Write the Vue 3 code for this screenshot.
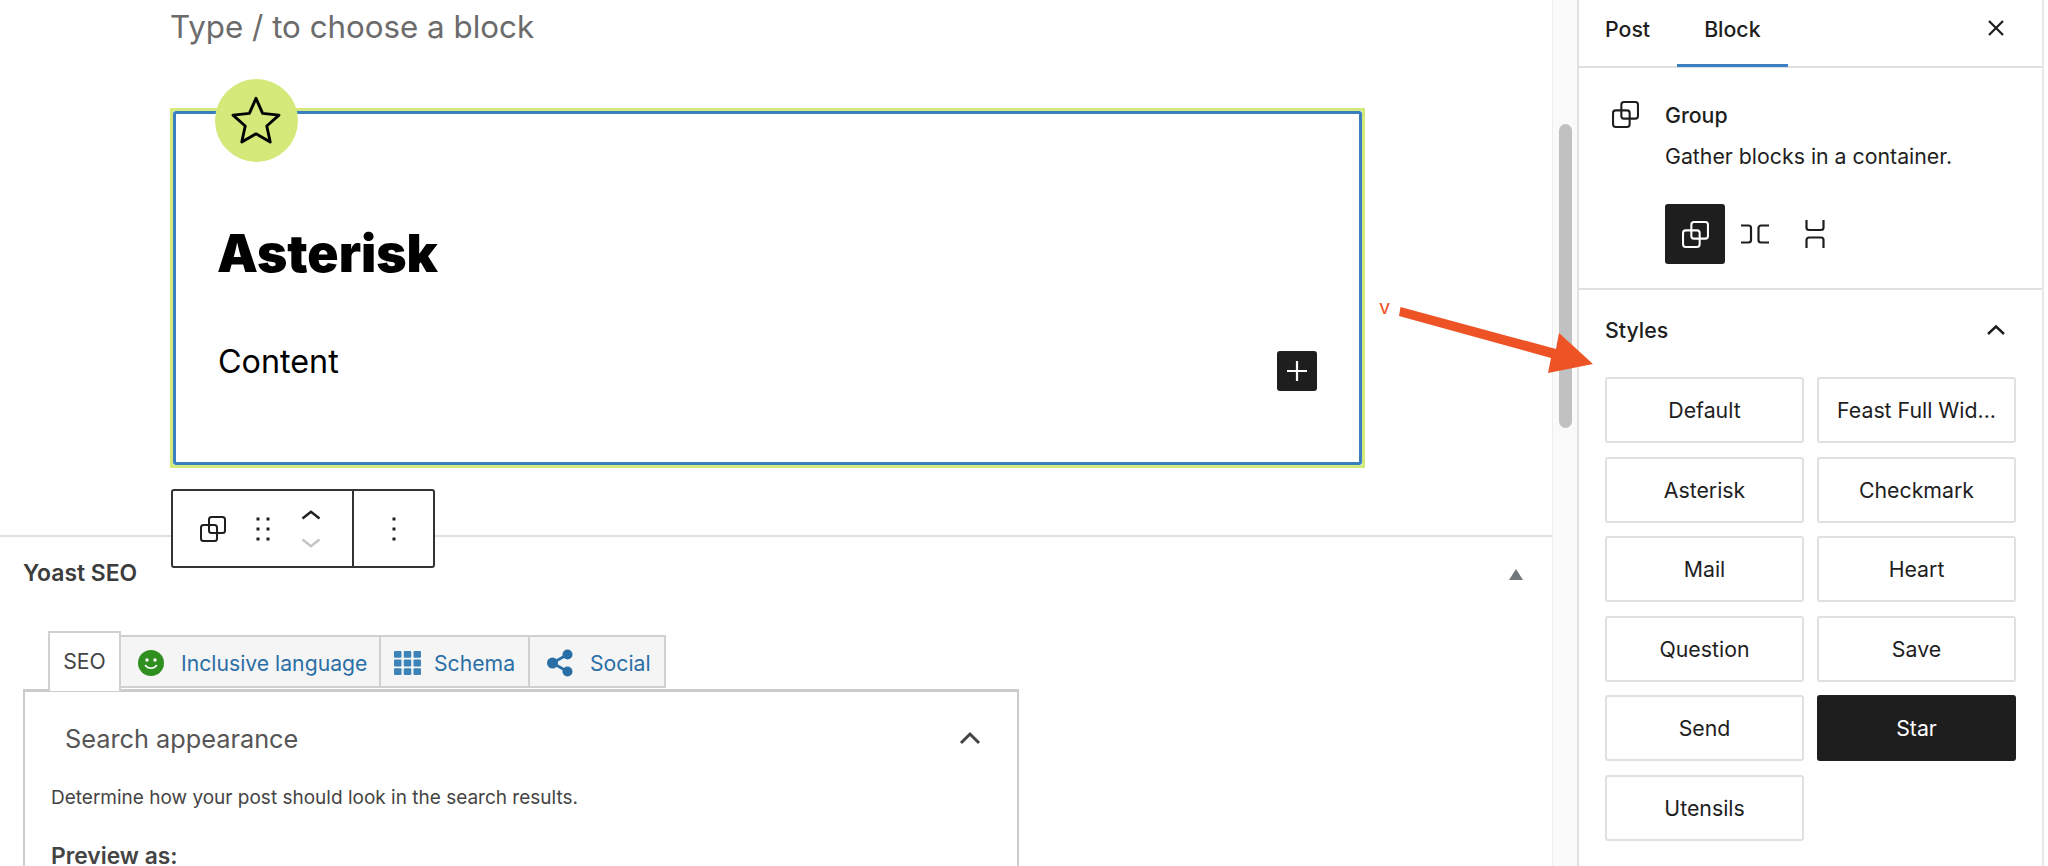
<template>
  <div class="app">
    <div class="editor">
      <div class="placeholder">Type / to choose a block</div>

      <div class="group-outer">
        <div class="group-inner">
          <h2 class="heading">Asterisk</h2>
          <p class="content-text">Content</p>
          <button class="plus">
            <svg width="24" height="24" viewBox="0 0 24 24"><path d="M12 2v20M2 12h20" stroke="#fff" stroke-width="2.2" fill="none" /></svg>
          </button>
        </div>
        <div class="star-badge">
          <svg class="star" width="52" height="50" viewBox="0 0 54 52">
            <path d="M27 3.5l6.9 15.6 17 1.8-12.7 11.3 3.6 16.7L27 40.4l-14.8 8.5 3.6-16.7L3.100 20.900l17-1.800z" fill="none" stroke="#000" stroke-width="3" stroke-linejoin="round" />
          </svg>
        </div>
      </div>

      <section class="yoast">
        <div class="yoast-head">
          <span class="yoast-title">Yoast SEO</span>
          <span class="triangle"></span>
        </div>
        <div class="yoast-tabs">
          <div class="ytab active">SEO</div>
          <div class="ytab inclusive">
            <svg width="26" height="26" viewBox="0 0 26 26">
              <circle cx="13" cy="13" r="13" fill="#2f8f1f" />
              <circle cx="9" cy="10" r="1.700" fill="#fff" />
              <circle cx="17" cy="10" r="1.700" fill="#fff" />
              <path d="M7.500 15.500c2.500 3.600 8.500 3.600 11 0" stroke="#fff" stroke-width="1.600" fill="none" stroke-linecap="round" />
            </svg>
            <span>Inclusive language</span>
          </div>
          <div class="ytab schema">
            <svg width="27" height="24" viewBox="0 0 27 24" fill="#3c84b8">
              <rect v-for="c in gridCells" :key="c.id" :x="c.x" :y="c.y" width="7.500" height="6.800" rx="1" />
            </svg>
            <span>Schema</span>
          </div>
          <div class="ytab social">
            <svg width="26" height="28" viewBox="0 0 26 28" fill="#2a6ea6">
              <circle cx="5.500" cy="14" r="5.500" />
              <circle cx="20.500" cy="5.500" r="5" />
              <circle cx="20.500" cy="22.500" r="5" />
              <path d="M5.500 14L20.500 5.500M5.500 14l15 8.500" stroke="#2a6ea6" stroke-width="2.600" />
            </svg>
            <span>Social</span>
          </div>
        </div>
        <div class="yoast-box">
          <div class="search-head">
            <span>Search appearance</span>
            <svg width="24" height="16" viewBox="0 0 24 16"><path d="M3 13l9-9 9 9" fill="none" stroke="#444" stroke-width="3" /></svg>
          </div>
          <p class="determine">Determine how your post should look in the search results.</p>
          <p class="preview">Preview as:</p>
        </div>
      </section>

      <div class="toolbar">
        <div class="tool-main">
          <svg class="tool-group" width="26" height="26" viewBox="0 0 26 26">
            <rect x="9" y="1" width="16" height="16" rx="2.500" fill="none" stroke="#1e1e1e" stroke-width="2" />
            <rect x="1" y="9" width="16" height="16" rx="2.500" fill="none" stroke="#1e1e1e" stroke-width="2" />
          </svg>
          <svg class="tool-drag" width="14" height="24" viewBox="0 0 14 24" fill="#1e1e1e">
            <rect x="0.500" y="0.500" width="3" height="3" /><rect x="10.500" y="0.500" width="3" height="3" />
            <rect x="0.500" y="10.500" width="3" height="3" /><rect x="10.500" y="10.500" width="3" height="3" />
            <rect x="0.500" y="20.500" width="3" height="3" /><rect x="10.500" y="20.500" width="3" height="3" />
          </svg>
          <div class="movers">
            <svg width="20" height="10" viewBox="0 0 20 10"><path d="M1.500 8.500L10 1.800l8.500 6.700" fill="none" stroke="#1e1e1e" stroke-width="2.400" /></svg>
            <svg width="20" height="10" viewBox="0 0 20 10"><path d="M1.500 1.500L10 8.200l8.500-6.700" fill="none" stroke="#c4c4c4" stroke-width="2.400" /></svg>
          </div>
        </div>
        <div class="tool-more">
          <svg width="4" height="24" viewBox="0 0 4 24" fill="#1e1e1e">
            <rect x="0.500" y="0.500" width="3" height="3" /><rect x="0.500" y="10.500" width="3" height="3" /><rect x="0.500" y="20.500" width="3" height="3" />
          </svg>
        </div>
      </div>
    </div>

    <div class="scroll-track"><div class="scroll-thumb"></div></div>

    <aside class="sidebar">
      <div class="side-tabs">
        <span class="side-tab">Post</span>
        <span class="side-tab current">Block</span>
        <svg class="close" width="20" height="20" viewBox="0 0 20 20"><path d="M3 3l14 14M17 3L3 17" stroke="#1e1e1e" stroke-width="2.200" fill="none" /></svg>
      </div>

      <div class="block-card">
        <svg class="card-icon" width="27" height="27" viewBox="0 0 26 26">
          <rect x="9" y="1" width="16" height="16" rx="2.500" fill="none" stroke="#1e1e1e" stroke-width="2" />
          <rect x="1" y="9" width="16" height="16" rx="2.500" fill="none" stroke="#1e1e1e" stroke-width="2" />
        </svg>
        <div class="card-body">
          <div class="card-title">Group</div>
          <div class="card-desc">Gather blocks in a container.</div>
          <div class="variations">
            <div class="variation on">
              <svg width="27" height="27" viewBox="0 0 26 26">
                <rect x="9" y="1" width="16" height="16" rx="2.500" fill="none" stroke="#fff" stroke-width="2" />
                <rect x="1" y="9" width="16" height="16" rx="2.500" fill="none" stroke="#fff" stroke-width="2" />
              </svg>
            </div>
            <div class="variation">
              <svg width="28" height="20" viewBox="0 0 28 20">
                <path d="M0 1.500h7.500a2.500 2.500 0 0 1 2.500 2.500v12a2.500 2.500 0 0 1-2.500 2.500H0M28 1.500h-8a2.500 2.500 0 0 0-2.500 2.500v12a2.500 2.500 0 0 0 2.500 2.500h8" fill="none" stroke="#1e1e1e" stroke-width="2.200" />
              </svg>
            </div>
            <div class="variation">
              <svg width="20" height="28" viewBox="0 0 20 28">
                <path d="M1.500 0v7.500A2.500 2.500 0 0 0 4 10h12a2.500 2.500 0 0 0 2.500-2.500V0M1.500 28v-8A2.500 2.500 0 0 1 4 17.500h12a2.500 2.500 0 0 1 2.500 2.500v8" fill="none" stroke="#1e1e1e" stroke-width="2.200" />
              </svg>
            </div>
          </div>
        </div>
      </div>

      <div class="styles-panel">
        <div class="styles-head">
          <span>Styles</span>
          <svg width="20" height="12" viewBox="0 0 20 12"><path d="M2 10l8-7.500 8 7.500" fill="none" stroke="#1e1e1e" stroke-width="2.400" /></svg>
        </div>
        <div class="style-grid">
          <div
            v-for="s in blockStyles"
            :key="s"
            class="style-btn"
            :class="{ selected: s === 'Star' }"
          >{{ s }}</div>
        </div>
      </div>
    </aside>

    <div class="annotation">
      <span class="arrow-v">v</span>
      <svg class="arrow" width="200" height="72" viewBox="0 0 200 72">
        <path d="M1.500 2L157 44 160 28 194 59 149 68 152 53 0 11z" fill="#ee5326" />
      </svg>
    </div>
  </div>
</template>

<script setup>
const blockStyles = [
  "Default", "Feast Full Wid...",
  "Asterisk", "Checkmark",
  "Mail", "Heart",
  "Question", "Save",
  "Send", "Star",
  "Utensils",
];

// 3 x 3 schema icon
const gridCells = [];
for (let row = 0; row < 3; row++) {
  for (let col = 0; col < 3; col++) {
    gridCells.push({ id: row * 3 + col, x: col * 9.75, y: row * 8.6 });
  }
}
</script>

<style>
html, body {
  margin: 0;
  background: #fff;
  overflow: hidden;
}
</style>

<style scoped>
.app {
  display: flex;
  position: relative;
  width: 2048px;
  height: 866px;
  overflow: hidden;
  background: #fff;
  font-family: Inter, "Liberation Sans", sans-serif;
  color: #1e1e1e;
}

/* editor column */
.editor {
  position: relative;
  flex: none;
  width: 1552px;
  height: 866px;
}
.placeholder {
  height: 54px;
  margin-bottom: 54px;
  padding-left: 170px;
  font-size: 31.300px;
  line-height: 54px;
  color: #6b6b6b;
}
.group-outer {
  position: relative;
  box-sizing: border-box;
  width: 1195px;
  height: 360px;
  margin-left: 170px;
  border: 3px solid #d3e97a;
}
.group-inner {
  position: relative;
  box-sizing: border-box;
  height: 100%;
  padding: 0 41px;
  border: 3px solid #3a7fc1;
  border-radius: 3px;
}
.heading {
  margin: 106px 0 0;
  font-size: 51.600px;
  line-height: 66px;
  font-weight: 900;
  color: #000;
}
.content-text {
  margin: 56px 0 0 1px;
  font-size: 32.300px;
  line-height: 40px;
  color: #000;
}
.plus {
  position: absolute;
  left: 1101px;
  top: 237px;
  display: flex;
  align-items: center;
  justify-content: center;
  width: 40px;
  height: 40px;
  padding: 0;
  border: 0;
  border-radius: 3px;
  background: #1e1e1e;
}
.star-badge {
  position: absolute;
  left: 42px;
  top: -32px;
  display: flex;
  align-items: center;
  justify-content: center;
  width: 83px;
  height: 83px;
  border-radius: 50%;
  background: #d3e97a;
}
.star {
  margin: 0 1px 2px 0;
}

/* block toolbar */
.toolbar {
  position: absolute;
  left: 171px;
  top: 489px;
  display: flex;
  box-sizing: border-box;
  width: 264px;
  height: 79px;
  border: 2px solid #333;
  border-radius: 3px;
  background: #fff;
}
.tool-main {
  display: flex;
  align-items: center;
  width: 179px;
  border-right: 2px solid #333;
}
.tool-group {
  margin-left: 27px;
}
.tool-drag {
  margin-left: 30px;
}
.movers {
  display: flex;
  flex-direction: column;
  gap: 18px;
  margin-left: 31px;
}
.tool-more {
  display: flex;
  flex: 1;
  align-items: center;
  justify-content: center;
}

/* yoast metabox */
.yoast {
  margin-top: 67px;
  border-top: 2px solid #e0e0e0;
}
.yoast-head {
  display: flex;
  align-items: center;
  justify-content: space-between;
  box-sizing: border-box;
  height: 74px;
  padding: 0 29px 2px 23px;
}
.yoast-title {
  font-size: 22.900px;
  font-weight: 600;
  color: #3c3c3c;
}
.triangle {
  width: 0;
  height: 0;
  margin-top: 2px;
  border-left: 7px solid transparent;
  border-right: 7px solid transparent;
  border-bottom: 11px solid #72777c;
}
.yoast-tabs {
  display: flex;
  align-items: flex-end;
  height: 59px;
  margin-top: 19px;
  margin-left: 48px;
  font-size: 21.200px;
  color: #2a6ea6;
}
.ytab {
  display: flex;
  align-items: center;
  box-sizing: border-box;
  height: 53px;
  margin-bottom: 1px;
  border: 2px solid #d0d0d0;
  border-left-width: 0;
  padding-top: 2px;
  background: #f5f5f5;
}
.ytab.active {
  justify-content: center;
  width: 73px;
  height: 60px;
  margin-bottom: -2px;
  border-left-width: 2px;
  border-bottom: 0;
  padding-top: 0;
  padding-bottom: 3px;
  background: #fff;
  color: #444;
  position: relative;
  z-index: 1;
}
.inclusive {
  width: 260px;
  padding-left: 17px;
  gap: 17px;
}
.schema {
  width: 149px;
  padding-left: 13px;
  gap: 13px;
}
.social {
  width: 136px;
  padding-left: 17px;
  gap: 17px;
}
.yoast-box {
  box-sizing: border-box;
  width: 996px;
  height: 177px;
  margin-left: 23px;
  border: 2px solid #ccc;
  border-top-width: 3px;
  border-bottom: 0;
  color: #444;
}
.search-head {
  display: flex;
  align-items: center;
  justify-content: space-between;
  height: 92px;
  padding: 0 35px 0 40px;
  font-size: 25.300px;
  color: #555;
}
.determine {
  margin: 0;
  padding-left: 26px;
  font-size: 19px;
  line-height: 28px;
}
.preview {
  margin: 33px 0 0;
  padding-left: 26px;
  font-size: 22.800px;
  line-height: 22px;
  font-weight: 600;
}

/* scrollbar between editor and sidebar */
.scroll-track {
  flex: none;
  box-sizing: border-box;
  width: 25px;
  height: 866px;
  padding: 124px 5px 0 6px;
  border-left: 1px solid #eee;
  background: #fafafa;
}
.scroll-thumb {
  height: 304px;
  border-radius: 7px;
  background: #c1c1c1;
}

/* settings sidebar */
.sidebar {
  flex: none;
  box-sizing: border-box;
  width: 467px;
  height: 866px;
  border-left: 2px solid #e0e0e0;
  border-right: 2px solid #e8e8e8;
}
.side-tabs {
  position: relative;
  display: flex;
  align-items: center;
  box-sizing: border-box;
  height: 68px;
  padding-left: 26px;
  padding-bottom: 9px;
  border-bottom: 2px solid #e0e0e0;
  font-size: 21.300px;
  font-weight: 500;
}
.side-tab.current {
  margin-left: 54px;
  position: relative;
}
.side-tab.current::after {
  content: "";
  position: absolute;
  left: -27px;
  right: -27px;
  top: 48px;
  height: 3px;
  background: #3a7fc1;
}
.close {
  position: absolute;
  right: 36px;
  top: 18px;
}
.block-card {
  display: flex;
  box-sizing: border-box;
  height: 222px;
  padding: 33px 0 0 33px;
  border-bottom: 2px solid #e0e0e0;
  font-size: 21.300px;
}
.card-body {
  margin-left: 26px;
}
.card-title {
  font-weight: 500;
  line-height: 28px;
}
.card-desc {
  margin-top: 13px;
  line-height: 28px;
}
.variations {
  display: flex;
  margin-top: 34px;
}
.variation {
  display: flex;
  align-items: center;
  justify-content: center;
  width: 60px;
  height: 60px;
  border-radius: 3px;
}
.variation.on {
  background: #1e1e1e;
}
.styles-head {
  display: flex;
  align-items: center;
  justify-content: space-between;
  box-sizing: border-box;
  height: 87px;
  padding: 0 36px 8px 26px;
  font-size: 21.300px;
  font-weight: 500;
}
.style-grid {
  display: grid;
  grid-template-columns: 199px 199px;
  grid-auto-rows: 66px;
  column-gap: 13px;
  row-gap: 13.600px;
  margin-left: 26px;
}
.style-btn {
  display: flex;
  align-items: center;
  justify-content: center;
  box-sizing: border-box;
  border: 2px solid #e0e0e0;
  border-radius: 3px;
  font-size: 21.300px;
}
.style-btn.selected {
  border-color: #1e1e1e;
  background: #1e1e1e;
  color: #fff;
}

/* red annotation over the screenshot */
.annotation {
  position: absolute;
  left: 1379px;
  top: 295px;
}
.arrow-v {
  position: absolute;
  left: 0;
  top: 0;
  font-size: 20px;
  color: #ee5326;
}
.arrow {
  position: absolute;
  left: 20px;
  top: 10px;
}
</style>
